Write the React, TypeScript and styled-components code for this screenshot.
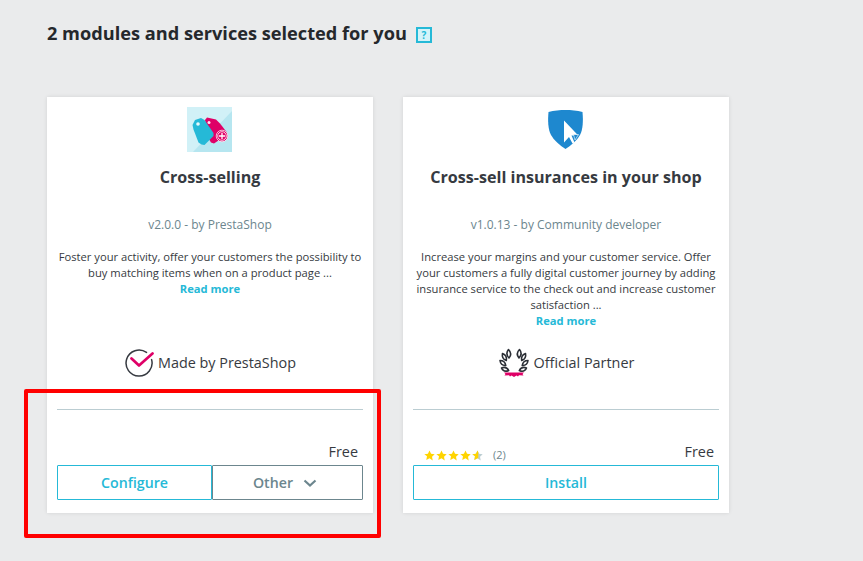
import React from "react";
import styled, { createGlobalStyle } from "styled-components";

const Global = createGlobalStyle`
  html, body { margin: 0; padding: 0; background: #eaebec; }
  body {
    font-family: "Open Sans", "Liberation Sans", sans-serif;
    color: #363a41;
  }
`;

const Page = styled.div`
  position: relative;
  width: 863px;
  height: 561px;
  overflow: hidden;
  padding: 21px 0 0 47px;
  box-sizing: border-box;
`;

const Heading = styled.h2`
  display: flex;
  align-items: center;
  gap: 9px;
  margin: 0;
  height: 24px;
  font-size: 18.2px;
  line-height: 24px;
  font-weight: 700;
  color: #25282c;
`;

const HelpBadge = styled.span`
  display: inline-flex;
  align-items: center;
  justify-content: center;
  width: 16px;
  height: 16px;
  margin-top: 4px;
  box-sizing: border-box;
  border: 2px solid #25b9d7;
  background: #d4f3f9;
  color: #25b9d7;
  font-size: 10px;
  line-height: 1;
  font-weight: 700;
`;

const Cards = styled.div`
  display: flex;
  gap: 30px;
  margin-top: 52px;
`;

const Card = styled.article`
  display: flex;
  flex-direction: column;
  width: 326px;
  height: 416px;
  padding: 10px;
  box-sizing: border-box;
  background: #fff;
  box-shadow: 0 0 4px rgba(0, 0, 0, 0.1);
  text-align: center;
`;

const IconSlot = styled.div`
  display: flex;
  justify-content: center;
  height: 45px;
  padding-right: 1px;
  svg { display: block; }
`;

const Title = styled.h3`
  margin: 13px 0 0;
  font-size: 16.1px;
  line-height: 24px;
  font-weight: 700;
  color: #363a41;
`;

const Version = styled.div`
  margin-top: 28px;
  font-size: 12px;
  line-height: 16px;
  color: #6c868e;
`;

const Description = styled.p`
  margin: 16px 0 0;
  height: 80px;
  font-size: 11.2px;
  line-height: 16px;
  color: #363a41;
`;

const ReadMore = styled.a`
  display: block;
  font-size: 11.2px;
  line-height: 16px;
  font-weight: 700;
  color: #25b9d7;
`;

const Badge = styled.div`
  display: flex;
  align-items: center;
  justify-content: center;
  gap: 4px;
  height: 30px;
  margin-top: 19px;
  font-size: 14.4px;
  line-height: 20px;
  color: #363a41;
`;

const Rule = styled.hr`
  width: 100%;
  height: 1px;
  margin: 31px 0 0;
  border: 0;
  background: #bbcdd2;
`;

const PriceRow = styled.div`
  display: flex;
  align-items: flex-end;
  justify-content: space-between;
  height: 55px;
  padding: 0 5px 3px 11px;
  box-sizing: border-box;
`;

const Rating = styled.div`
  display: flex;
  align-items: center;
  gap: 10px;
  font-size: 11px;
  line-height: 14px;
  color: #6c868e;
`;

const Stars = styled.div`
  display: flex;
  gap: 1px;
`;

const Price = styled.div`
  margin-left: auto;
  font-size: 14.4px;
  line-height: 20px;
  color: #363a41;
`;

const Actions = styled.div`
  display: flex;
`;

const ActionButton = styled.button<{ $tone: "primary" | "secondary"; $width: string }>`
  display: flex;
  align-items: center;
  justify-content: center;
  gap: 10px;
  flex: 0 0 ${(p) => p.$width};
  height: 35px;
  padding: 0 ${(p) => (p.$tone === "primary" ? "0" : "5px")} 0 0;
  box-sizing: border-box;
  background: #fff;
  border: 1px solid ${(p) => (p.$tone === "primary" ? "#25b9d7" : "#6c868e")};
  border-radius: 1px;
  color: ${(p) => (p.$tone === "primary" ? "#25b9d7" : "#6c868e")};
  font-family: inherit;
  font-size: 14.2px;
  line-height: 20px;
  font-weight: 600;
`;

const Annotation = styled.div`
  position: absolute;
  left: 24px;
  top: 389px;
  width: 357px;
  height: 149px;
  box-sizing: border-box;
  border: 4px solid #ff0000;
  border-radius: 2px;
  pointer-events: none;
`;

const TagsIcon = () => (
  <svg width="45" height="45" viewBox="0 0 45 45">
    <rect width="45" height="45" fill="#d1f1f7" />
    <path d="M45 4V45H6Z" fill="#b6e6f0" />
    <path d="M18 13l2-2.500 9 2 4 4 7 9-4 5-9 6-3-1-3-5Z" fill="#df0067" />
    <path d="M5.500 18l2.500-5 6-2 3.500 2 9 13v3l-9 9-3-.5-3-2-5-13Z" fill="#25b9d7" />
    <circle cx="11" cy="17" r="1.800" fill="#fff" opacity=".9" />
    <circle cx="22" cy="15.500" r="1.500" fill="#fff" opacity=".9" />
    <circle cx="35" cy="29" r="5.800" fill="#df0067" stroke="#fff" strokeWidth=".7" />
    <path d="M35 26v6M32 29h6" stroke="#fff" strokeWidth="1.300" />
    <circle cx="35" cy="29" r="4.300" fill="none" stroke="#fff" strokeWidth=".8" />
  </svg>
);

const ShieldIcon = () => (
  <svg width="45" height="45" viewBox="0 0 45 45">
    <path d="M5.500 5C11 3.500 17 3 22.500 3S34 3.500 39.500 5c.8 9 .5 17-2.500 23-3 5.500-8.500 10-14.500 14-6-4-11.500-8.500-14.500-14C5 22 4.700 14 5.500 5Z" fill="#1e88cf" />
    <path d="M21 13.500v22l5-5.500 3.500 6.500 2-1-3-7 7 .2Z" fill="#fff" />
    <path d="M30.500 27.500h5l-3.500 5.500Z" fill="#1e88cf" stroke="#fff" strokeWidth=".6" />
  </svg>
);

const CheckIcon = () => (
  <svg width="30" height="30" viewBox="0 0 30 30">
    <path d="M22.500 4.400A13 13 0 1 0 27.600 11.600" fill="none" stroke="#363a41" strokeWidth="1.500" strokeLinecap="round" />
    <path d="M7.500 10.500l7.500 7L28.500 5.500" fill="none" stroke="#df0067" strokeWidth="2.700" strokeLinecap="round" strokeLinejoin="round" />
  </svg>
);

const Leaf = ({ d }: { d: string }) => <path d={d} fill="none" stroke="#2b2f36" strokeWidth="1.600" strokeLinejoin="round" />;

const LaurelIcon = () => (
  <svg width="32" height="30" viewBox="0 0 32 30">
    <Leaf d="M10.500 1.500c2.500 2.500 3 5.500 .5 8.500-2.300-2.500-3-5.500-.5-8.500Z" />
    <Leaf d="M4.500 5.500c3 1.200 4.500 3.500 3.800 7-3.300-1.200-4.500-3.500-3.800-7Z" />
    <Leaf d="M2 12.500c3.300 0 5.300 1.800 5.800 5-3.300.2-5.300-1.500-5.800-5Z" />
    <Leaf d="M3.500 20c3-1.200 5.800-.3 7.200 2.500-3 1.400-5.800.5-7.200-2.500Z" />
    <Leaf d="M21.500 1.500c-2.500 2.500-3 5.500-.5 8.500 2.300-2.500 3-5.500 .5-8.500Z" />
    <Leaf d="M27.500 5.500c-3 1.200-4.500 3.500-3.800 7 3.300-1.200 4.500-3.500 3.800-7Z" />
    <Leaf d="M30 12.500c-3.300 0-5.300 1.800-5.800 5 3.300.2 5.300-1.500 5.800-5Z" />
    <Leaf d="M28.500 20c-3-1.200-5.800-.3-7.200 2.500 3 1.400 5.800.5 7.200-2.500Z" />
    <path d="M6 24.500h20l-1.500 1.500 1 1.500-4.500-.3-1 1.300-1.500-1-2.500 1.500-2.500-1.500-1.500 1-1-1.300-4.500.3 1-1.500Z" fill="#df0067" />
  </svg>
);

const Star = ({ half }: { half?: boolean }) => (
  <svg width="11" height="11" viewBox="0 0 24 24">
    <path d="M12 1l3.400 7.300 7.900 1-5.800 5.500 1.500 7.900L12 17.800l-7 3.900 1.500-7.900L.7 9.300l7.900-1Z" fill={half ? "#bbcdd2" : "#ffd400"} />
    {half && <path d="M12 1l1.700 3.700v14L12 17.800l-7 3.900 1.500-7.900L.7 9.300l7.900-1Z" fill="#ffd400" />}
  </svg>
);

const Chevron = () => (
  <svg width="14" height="14" viewBox="0 0 14 14">
    <path d="M1.500 4.500L7 9.500l5.500-5" fill="none" stroke="#6c868e" strokeWidth="2.200" />
  </svg>
);

export default function App() {
  return (
    <>
      <Global />
      <Page>
        <Heading>
          2 modules and services selected for you
          <HelpBadge>?</HelpBadge>
        </Heading>
        <Cards>
          <Card>
            <IconSlot><TagsIcon /></IconSlot>
            <Title>Cross-selling</Title>
            <Version>v2.0.0 - by PrestaShop</Version>
            <Description>
              Foster your activity, offer your customers the possibility to buy matching items when on a product page ...
              <ReadMore>Read more</ReadMore>
            </Description>
            <Badge><CheckIcon />Made by PrestaShop</Badge>
            <Rule />
            <PriceRow><Price>Free</Price></PriceRow>
            <Actions>
              <ActionButton $tone="primary" $width="155px">Configure</ActionButton>
              <ActionButton $tone="secondary" $width="151px">Other <Chevron /></ActionButton>
            </Actions>
          </Card>
          <Card>
            <IconSlot><ShieldIcon /></IconSlot>
            <Title>Cross-sell insurances in your shop</Title>
            <Version>v1.0.13 - by Community developer</Version>
            <Description>
              Increase your margins and your customer service. Offer your customers a fully digital customer journey by adding insurance service to the check out and increase customer satisfaction ...
              <ReadMore>Read more</ReadMore>
            </Description>
            <Badge><LaurelIcon />Official Partner</Badge>
            <Rule />
            <PriceRow>
              <Rating>
                <Stars><Star /><Star /><Star /><Star /><Star half /></Stars>
                (2)
              </Rating>
              <Price>Free</Price>
            </PriceRow>
            <Actions>
              <ActionButton $tone="primary" $width="100%">Install</ActionButton>
            </Actions>
          </Card>
        </Cards>
        <Annotation />
      </Page>
    </>
  );
}
